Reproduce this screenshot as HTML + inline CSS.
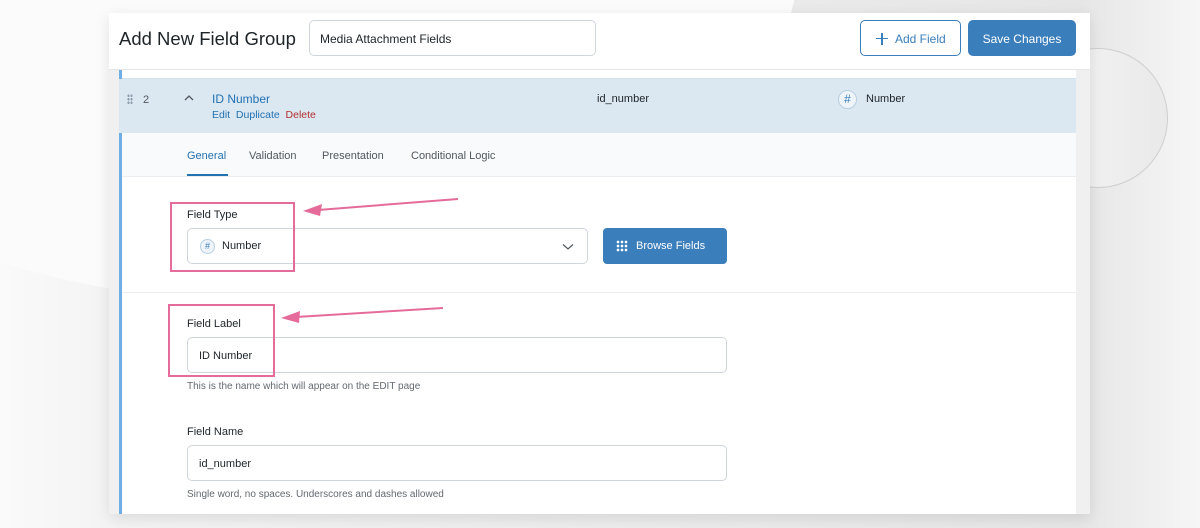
<!DOCTYPE html>
<html><head><meta charset="utf-8"><style>
*{box-sizing:border-box;margin:0;padding:0}
body{width:1200px;height:528px;overflow:hidden;position:relative;font-family:"Liberation Sans",sans-serif;background:linear-gradient(90deg,#fafafa 0%,#f3f3f3 10%,#e6e6e6 90%,#f6f6f6 100%);}
.blob{position:absolute;left:-300px;top:-400px;width:1100px;height:700px;border-radius:50%;background:#fbfbfb}
.circle{position:absolute;left:1028px;top:48px;width:140px;height:140px;border-radius:50%;border:1px solid #cfcfcf;background:linear-gradient(90deg,#f7f7f7,#e9e9e9)}
.frame{position:absolute;left:109px;top:13px;width:981px;height:501px;background:#f0f0f1;box-shadow:0 4px 14px rgba(0,0,0,.1)}
.hdr{position:absolute;left:0;top:0;width:981px;height:57px;background:#fff;border-bottom:1px solid #e6e6e6}
.title{position:absolute;left:10px;top:15px;font-size:18.5px;color:#1d2327}
.tin{position:absolute;left:200px;top:7px;width:287px;height:36px;border:1px solid #d0d5dd;border-radius:5px;font-size:12px;color:#1d2327;padding:11px 10px}
.addf{position:absolute;left:751px;top:7px;width:101px;height:36px;border:1px solid #3a7ebb;border-radius:5px;color:#3a7ebb;font-size:12px;padding:11px 0 0 34px}
.addf:before{content:"";position:absolute;left:15px;top:17px;width:12px;height:1.4px;background:#3a7ebb}
.addf:after{content:"";position:absolute;left:20.3px;top:11.7px;width:1.4px;height:12px;background:#3a7ebb}
.save{position:absolute;left:859px;top:7px;width:108px;height:36px;background:#3a7ebb;border-radius:5px;color:#fff;font-size:12px;text-align:center;padding-top:12px}
.main{position:absolute;left:10px;top:57px;width:957px;height:444px;background:#fff;border-left:3px solid #72aee6}
.stub{position:absolute;left:0;top:0;width:954px;height:9px;background:#fff;border-bottom:1px solid #d5e3ef}
.row{position:absolute;left:-3px;top:9px;width:957px;height:54px;background:#dbe8f2;border-left:0}
.tabs{position:absolute;left:0;top:63px;width:954px;height:44px;background:#f9fafb;border-bottom:1px solid #eceef1}
.tab{position:absolute;top:17px;font-size:11px;color:#50575e}
.sec1{position:absolute;left:0;top:107px;width:954px;height:116px;border-bottom:1px solid #eceef1}
.lab{position:absolute;font-size:11px;color:#1d2327;font-weight:normal}
.inp{position:absolute;border:1px solid #d0d5dd;border-radius:5px;font-size:11px;color:#1d2327;background:#fff}
.hint{position:absolute;font-size:10px;color:#646970}
.pink{position:absolute;border:2px solid #e46b9a}
</style></head><body>
<div class="blob"></div>
<div class="circle"></div>
<div class="frame">
 <div class="hdr">
  <div class="title">Add New Field Group</div>
  <div class="tin">Media Attachment Fields</div>
  <div class="addf">Add Field</div>
  <div class="save">Save Changes</div>
 </div>
 <div class="main">
  <div class="stub"></div>
  <div class="row">
   <div style="position:absolute;left:8px;top:15px;width:6px;height:10px;background-image:radial-gradient(#8a9aa8 1px,transparent 1.2px);background-size:3px 3.5px"></div>
   <div style="position:absolute;left:24px;top:15px;font-size:11px;color:#50575e">2</div>
   <svg style="position:absolute;left:65px;top:15px" width="10" height="8" viewBox="0 0 10 8"><path d="M1 6 L5 2 L9 6" stroke="#50575e" stroke-width="1.3" fill="none"/></svg>
   <div style="position:absolute;left:93px;top:13px;font-size:12px;color:#2271b1">ID Number</div>
   <div style="position:absolute;left:93px;top:30px;font-size:10.5px;color:#2271b1">Edit&nbsp; Duplicate&nbsp; <span style="color:#b32d2e">Delete</span></div>
   <div style="position:absolute;left:478px;top:14px;font-size:11px;color:#1d2327">id_number</div>
   <div style="position:absolute;left:719px;top:11px;width:19px;height:19px;border-radius:50%;border:1px solid #b8cfe2;background:#eef4f9;color:#3a7ebb;font-size:12px;text-align:center;line-height:17px">#</div>
   <div style="position:absolute;left:747px;top:14px;font-size:11px;color:#1d2327">Number</div>
  </div>
  <div class="tabs">
   <div class="tab" style="left:65px;color:#2271b1">General</div>
   <div style="position:absolute;left:65px;top:41px;width:41px;height:2px;background:#2271b1"></div>
   <div class="tab" style="left:127px">Validation</div>
   <div class="tab" style="left:200px">Presentation</div>
   <div class="tab" style="left:289px">Conditional Logic</div>
  </div>
  <div class="sec1">
   <div class="lab" style="left:65px;top:32px">Field Type</div>
   <div class="inp" style="left:65px;top:51px;width:401px;height:36px">
    <div style="position:absolute;left:12px;top:10px;width:15px;height:15px;border-radius:50%;border:1px solid #b8cfe2;background:#eef4f9;color:#3a7ebb;font-size:9px;text-align:center;line-height:13px">#</div>
    <div style="position:absolute;left:34px;top:11px">Number</div>
    <svg style="position:absolute;left:374px;top:14px" width="12" height="8" viewBox="0 0 12 8"><path d="M1 1.5 L6 6 L11 1.5" stroke="#50575e" stroke-width="1.2" fill="none"/></svg>
   </div>
   <div style="position:absolute;left:481px;top:51px;width:124px;height:36px;background:#3a7ebb;border-radius:4px;color:#fff;font-size:11px;padding:12px 0 0 33px">
    <div style="position:absolute;left:13px;top:12px;width:12px;height:12px;background-image:radial-gradient(#fff 1.2px,transparent 1.5px);background-size:4px 4px"></div>Browse Fields</div>
  </div>
  <div class="lab" style="left:65px;top:248px">Field Label</div>
  <div class="inp" style="left:65px;top:267px;width:540px;height:36px;padding:12px 11px">ID Number</div>
  <div class="hint" style="left:65px;top:311px">This is the name which will appear on the EDIT page</div>
  <div class="lab" style="left:65px;top:356px">Field Name</div>
  <div class="inp" style="left:65px;top:375px;width:540px;height:36px;padding:12px 11px">id_number</div>
  <div class="hint" style="left:65px;top:419px">Single word, no spaces. Underscores and dashes allowed</div>
 </div>
</div>
<div class="pink" style="left:170px;top:202px;width:125px;height:70px"></div>
<div class="pink" style="left:168px;top:304px;width:107px;height:73px"></div>
<svg style="position:absolute;left:0;top:0" width="1200" height="528">
 <path d="M458 199 L318 210" stroke="#e46b9a" stroke-width="2"/>
 <path d="M303 211 L322 204 L320 216 Z" fill="#e46b9a"/>
 <path d="M443 308 L296 317" stroke="#e46b9a" stroke-width="2"/>
 <path d="M281 318 L300 311 L299 323 Z" fill="#e46b9a"/>
</svg>
</body></html>
